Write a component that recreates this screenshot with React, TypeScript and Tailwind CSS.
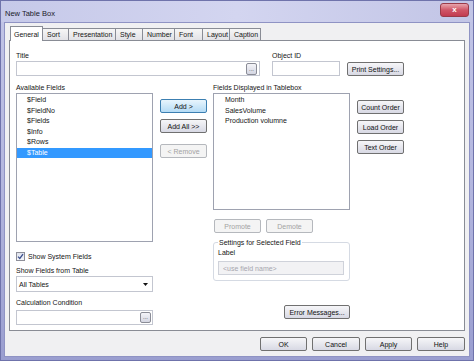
import React from "react";

const btnBase =
  "flex items-center justify-center shrink-0 rounded-[2px] border leading-none";
const btnNormal =
  "border-[#707070] bg-linear-to-b from-[#f6f6f8] to-[#d8d9e4] text-[#111]";
const btnDefault =
  "border-[#3c7fb1] bg-linear-to-b from-[#e8f5fd] to-[#b4dbf5] text-[#111]";
const btnDisabled = "border-[#b5b8bd] bg-[#f4f4f4] text-[#a3a3a3]";

function Btn({
  children,
  className,
  kind = "normal",
}: {
  children: React.ReactNode;
  className: string;
  kind?: "normal" | "default" | "disabled";
}) {
  const k = kind === "default" ? btnDefault : kind === "disabled" ? btnDisabled : btnNormal;
  return <div className={`${btnBase} ${k} ${className}`}>{children}</div>;
}

function Dots({ className }: { className: string }) {
  return (
    <div
      className={`flex items-end justify-center rounded-[2px] border border-[#8a8c96] bg-linear-to-b from-[#f4f4f8] to-[#d4d6e2] text-[6px] leading-[6px] pb-[2px] text-[#333] ${className}`}
    >
      ...
    </div>
  );
}

const tabs: { label: string; w: string }[] = [
  { label: "Sort", w: "w-[26px]" },
  { label: "Presentation", w: "w-[47px]" },
  { label: "Style", w: "w-[27px]" },
  { label: "Number", w: "w-[32px]" },
  { label: "Font", w: "w-[28px]" },
  { label: "Layout", w: "w-[27px]" },
  { label: "Caption", w: "w-[31px]" },
];

export default function App() {
  return (
    <div className="w-[474px] h-[361px] overflow-hidden flex flex-col border border-[#6f73ab] bg-linear-to-b from-[#c2c5e7] via-[#b4b7df] to-[#9a9ed0] font-['Liberation_Sans',Arial,sans-serif] text-[7px] text-[#151515]">
      {/* Title bar */}
      <div className="h-[21px] flex items-start justify-between shrink-0 bg-linear-to-r from-[#c6c9e9] via-[#d3d5f0] to-[#c2c5e6]">
        <span className="mt-[8px] ml-[4px] text-[7.5px] leading-[9px] text-[#1a1a2a]">
          New Table Box
        </span>
        <div className="mt-[2px] mr-[4px] w-[29px] h-[14px] rounded-[3px] border border-[#9a3a48] bg-linear-to-b from-[#e7a4ad] via-[#cf5567] to-[#c23b50] flex items-center justify-center text-white text-[8px] font-bold leading-none">
          x
        </div>
      </div>

      {/* Client area */}
      <div className="ml-[3px] w-[466px] h-[335px] shrink-0 bg-[#f0f0f2] border border-[#8f93c4] flex flex-col">
        {/* Tabs */}
        <div className="mt-[3px] ml-[5px] h-[14px] flex items-end shrink-0">
          <div className="relative z-10 -mb-px w-[33px] h-[15px] border border-b-0 border-[#898c95] bg-white pl-[3px] pt-[3px] leading-[9px]">
            General
          </div>
          {tabs.map((t, i) => (
            <div
              key={i}
              className={`${t.w} h-[12px] border border-b-0 border-l-0 border-[#898c95] bg-linear-to-b from-[#f6f6f6] to-[#e2e2e6] pl-[4px] pt-[1px] leading-[9px]`}
            >
              {t.label}
            </div>
          ))}
        </div>

        {/* Tab panel */}
        <div className="ml-[4px] w-[456px] h-[291px] shrink-0 border border-[#898c95] bg-white pl-[6px] pt-[10px] flex flex-col">
          {/* Row 1 */}
          <div className="flex items-end">
            <div className="w-[244px] flex flex-col">
              <div className="leading-[9px] h-[9px]">Title</div>
              <div className="mt-[1px] h-[15px] border border-[#c3c6d0] bg-white flex items-center justify-end pr-[2px]">
                <Dots className="w-[11px] h-[12px]" />
              </div>
            </div>
            <div className="ml-[12px] w-[68px] flex flex-col">
              <div className="leading-[9px] h-[9px]">Object ID</div>
              <div className="mt-[1px] h-[15px] border border-[#c3c6d0] bg-white" />
            </div>
            <Btn className="ml-[7px] w-[57px] h-[14px]">Print Settings...</Btn>
          </div>

          {/* Row 2 */}
          <div className="mt-[7px] flex">
            {/* Left column */}
            <div className="w-[137px] flex flex-col">
              <div className="leading-[9px] h-[9px]">Available Fields</div>
              <div className="mt-[1px] h-[149px] border border-[#9ea2b0] bg-white pt-[1px] flex flex-col">
                {["$Field", "$FieldNo", "$Fields", "$Info", "$Rows"].map((f) => (
                  <div key={f} className="h-[10.5px] leading-[10.5px] pl-[10px]">
                    {f}
                  </div>
                ))}
                <div className="h-[10.5px] leading-[10.5px] pl-[10px] bg-[#3399ff] text-white">
                  $Table
                </div>
              </div>
              <div className="mt-[10px] h-[9px] flex items-center gap-[3px]">
                <div className="w-[9px] h-[9px] border border-[#8e8f99] bg-linear-to-b from-[#dfe3ee] to-[#f5f6fa] flex items-center justify-center">
                  <svg width="7" height="7" viewBox="0 0 7 7">
                    <path d="M1 3.6 L2.8 5.4 L6 1.2" stroke="#3b4f8c" strokeWidth="1.3" fill="none" />
                  </svg>
                </div>
                <span className="leading-[9px]">Show System Fields</span>
              </div>
              <div className="mt-[5px] leading-[9px] h-[9px]">Show Fields from Table</div>
              <div className="mt-[1px] h-[16px] border border-[#c3c6d0] bg-white flex items-center justify-between pl-[2px] pr-[4px]">
                <span className="leading-[9px]">All Tables</span>
                <svg width="5" height="3" viewBox="0 0 5 3">
                  <path d="M0 0 L5 0 L2.5 3 Z" fill="#111" />
                </svg>
              </div>
              <div className="mt-[6px] leading-[9px] h-[9px]">Calculation Condition</div>
              <div className="mt-[3px] h-[15px] border border-[#c3c6d0] bg-white flex items-center justify-end pr-[1px]">
                <Dots className="w-[11px] h-[11px]" />
              </div>
            </div>

            {/* Middle buttons */}
            <div className="ml-[7px] w-[47px] flex flex-col pt-[16px]">
              <Btn kind="default" className="w-[47px] h-[14px]">Add &gt;</Btn>
              <Btn className="mt-[6px] w-[47px] h-[14px]">Add All &gt;&gt;</Btn>
              <Btn kind="disabled" className="mt-[11px] w-[47px] h-[14px]">&lt; Remove</Btn>
            </div>

            {/* Right column */}
            <div className="ml-[6px] w-[137px] flex flex-col">
              <div className="leading-[9px] h-[9px]">Fields Displayed in Tablebox</div>
              <div className="mt-[1px] h-[117px] border border-[#9ea2b0] bg-white pt-[1px] flex flex-col">
                {["Month", "SalesVolume", "Production volumne"].map((f) => (
                  <div key={f} className="h-[10.5px] leading-[10.5px] pl-[11px]">
                    {f}
                  </div>
                ))}
              </div>
              <div className="mt-[9px] flex">
                <Btn kind="disabled" className="ml-[1px] w-[47px] h-[14px]">Promote</Btn>
                <Btn kind="disabled" className="ml-[5px] w-[47px] h-[14px]">Demote</Btn>
              </div>
              <div className="mt-[9px] h-[39px] border border-[#d5dae3] rounded-[3px] flex flex-col">
                <span className="-mt-[5px] ml-[4px] self-start bg-white px-[1px] leading-[9px] h-[9px]">
                  Settings for Selected Field
                </span>
                <span className="mt-[1px] ml-[4px] leading-[9px] h-[9px]">Label</span>
                <div className="mt-[4px] ml-[4px] w-[126px] h-[14px] border border-[#cfd2da] bg-[#f2f2f4] pl-[4px] flex items-center text-[#a6a6ae] leading-[9px]">
                  &lt;use field name&gt;
                </div>
              </div>
              <Btn className="mt-[24px] self-end w-[66px] h-[14px]">Error Messages...</Btn>
            </div>

            {/* Far right buttons */}
            <div className="ml-[7px] w-[47px] flex flex-col pt-[17px]">
              <Btn className="w-[47px] h-[14px]">Count Order</Btn>
              <Btn className="mt-[6px] w-[47px] h-[14px]">Load Order</Btn>
              <Btn className="mt-[6px] w-[47px] h-[14px]">Text Order</Btn>
            </div>
          </div>
        </div>

        {/* Bottom buttons */}
        <div className="mt-[6px] flex justify-end gap-[5px] pr-[4px]">
          <Btn className="w-[47px] h-[14px]">OK</Btn>
          <Btn className="w-[48px] h-[14px]">Cancel</Btn>
          <Btn className="w-[47px] h-[14px]">Apply</Btn>
          <Btn className="w-[48px] h-[14px]">Help</Btn>
        </div>
      </div>
    </div>
  );
}
